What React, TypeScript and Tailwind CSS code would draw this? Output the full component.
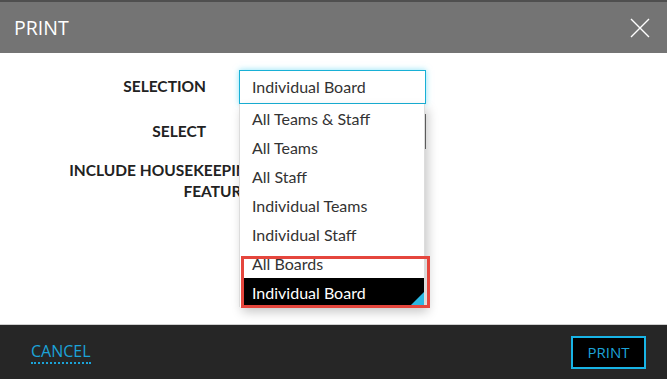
import { useState } from "react";

// Opsi untuk dropdown SELECTION
const options = [
  "All Teams & Staff",
  "All Teams",
  "All Staff",
  "Individual Teams",
  "Individual Staff",
  "All Boards",
  "Individual Board",
];

export default function App() {
  const [selected] = useState("Individual Board");

  return (
    <div className="flex h-[379px] w-[667px] flex-col overflow-hidden bg-white font-['Lato',sans-serif]">
      {/* --- HEADER --- */}
      <div className="flex h-[53px] shrink-0 items-center justify-between border-t-2 border-[#4f4f4f] bg-[#747474] pl-[14px] pr-[17px]">
        <h1 className="font-['Open_Sans',sans-serif] text-[19.5px] text-white">PRINT</h1>
        <button className="flex h-[20px] w-[20px] items-center justify-center">
          <svg width="20" height="20" viewBox="0 0 20 20">
            <path d="M1 1 L19 19 M19 1 L1 19" stroke="white" strokeWidth="1.4" fill="none" />
          </svg>
        </button>
      </div>

      {/* --- BODY --- */}
      <div className="relative flex-1 bg-white pt-[17px]">
        <div className="flex h-[34px] items-center">
          <label className="w-[206px] text-right text-[15.5px] font-bold text-[#222]">SELECTION</label>
          <div className="ml-[33px] flex h-[34px] w-[187px] items-center border border-[#18b0d6] bg-white pl-[12px] text-[16px] text-[#333] shadow-[0_0_6px_rgba(40,200,240,0.55)]">
            {selected}
          </div>
        </div>

        <div className="mt-[10px] flex h-[35px] items-center">
          <label className="w-[206px] text-right text-[15.5px] font-bold text-[#222]">SELECT</label>
          <div className="ml-[33px] h-[35px] w-[187px] border border-[#6b6b6b] bg-white" />
        </div>

        <div className="mt-[11px] flex">
          <label className="w-[259px] text-right text-[15.5px] font-bold leading-[21px] text-[#222]">
            INCLUDE HOUSEKEEPING
            <br />
            FEATURES
          </label>
        </div>

        {/* Dropdown terbuka */}
        <div className="absolute left-[239px] top-[51px] w-[186px] border-x border-[#dcdcdc] bg-white shadow-[3px_5px_10px_rgba(0,0,0,0.22)]">
          {options.map((opt) => (
            <div
              key={opt}
              className={`relative flex h-[29px] items-center text-[16px] ${
                opt === selected ? "ml-[4px] bg-black pl-[8px] text-white" : "pl-[12px] text-[#333]"
              }`}
            >
              {opt}
              {opt === selected && (
                <span className="absolute bottom-[2px] right-0 h-0 w-0 border-b-[13px] border-l-[13px] border-b-[#2bb8e3] border-l-transparent" />
              )}
            </div>
          ))}

          {/* Kotak sorotan merah */}
          <div className="absolute left-[1px] top-[152px] h-[52px] w-[189px] border-[3px] border-[#e5463d]" />
        </div>
      </div>

      {/* --- FOOTER --- */}
      <div className="flex h-[55px] shrink-0 items-center justify-between border-t border-[#d0d0d0] bg-[#262626] pl-[31px] pr-[21px] font-['Open_Sans',sans-serif]">
        <button className="border-b-2 border-dotted border-[#1ca3d8] pb-[1px] text-[16px] leading-[20px] text-[#1ca3d8]">
          CANCEL
        </button>
        <button className="flex h-[33px] w-[75px] items-center justify-center border-2 border-[#18b4e6] bg-black text-[15px] text-[#1ca3d8]">
          PRINT
        </button>
      </div>
    </div>
  );
}
